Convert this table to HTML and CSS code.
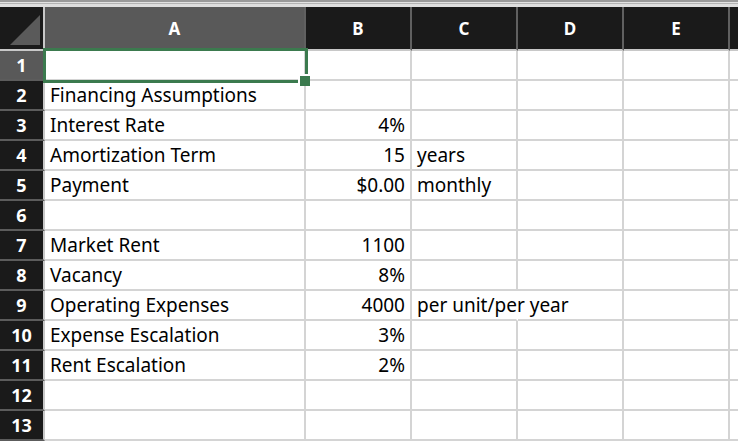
FILE: index.html
```html
<!DOCTYPE html>
<html>
<head>
<meta charset="utf-8">
<link rel="stylesheet" href="styles.css">
</head>
<body>
<div class="sheet">
  <div class="topstrip"></div>
  <div class="grid">
    <div class="corner"><svg width="43" height="42" viewBox="0 0 43 42"><polygon points="40,8 40,38 10,38" fill="#5a5a5a"/></svg></div>
    <div class="colhdr sel">A</div>
    <div class="colhdr">B</div>
    <div class="colhdr">C</div>
    <div class="colhdr">D</div>
    <div class="colhdr">E</div>
    <div class="colhdr last"></div>

    <div class="rowhdr sel">1</div>
    <div class="cell"></div><div class="cell"></div><div class="cell"></div><div class="cell"></div><div class="cell"></div><div class="cell last"></div>

    <div class="rowhdr">2</div>
    <div class="cell">Financing Assumptions</div><div class="cell"></div><div class="cell"></div><div class="cell"></div><div class="cell"></div><div class="cell last"></div>

    <div class="rowhdr">3</div>
    <div class="cell">Interest Rate</div><div class="cell num">4%</div><div class="cell"></div><div class="cell"></div><div class="cell"></div><div class="cell last"></div>

    <div class="rowhdr">4</div>
    <div class="cell">Amortization Term</div><div class="cell num">15</div><div class="cell">years</div><div class="cell"></div><div class="cell"></div><div class="cell last"></div>

    <div class="rowhdr">5</div>
    <div class="cell">Payment</div><div class="cell num">$0.00</div><div class="cell">monthly</div><div class="cell"></div><div class="cell"></div><div class="cell last"></div>

    <div class="rowhdr">6</div>
    <div class="cell"></div><div class="cell"></div><div class="cell"></div><div class="cell"></div><div class="cell"></div><div class="cell last"></div>

    <div class="rowhdr">7</div>
    <div class="cell">Market Rent</div><div class="cell num">1100</div><div class="cell"></div><div class="cell"></div><div class="cell"></div><div class="cell last"></div>

    <div class="rowhdr">8</div>
    <div class="cell">Vacancy</div><div class="cell num">8%</div><div class="cell"></div><div class="cell"></div><div class="cell"></div><div class="cell last"></div>

    <div class="rowhdr">9</div>
    <div class="cell">Operating Expenses</div><div class="cell num">4000</div><div class="cell spill">per unit/per year</div><div class="cell"></div><div class="cell"></div><div class="cell last"></div>

    <div class="rowhdr">10</div>
    <div class="cell">Expense Escalation</div><div class="cell num">3%</div><div class="cell"></div><div class="cell"></div><div class="cell"></div><div class="cell last"></div>

    <div class="rowhdr">11</div>
    <div class="cell">Rent Escalation</div><div class="cell num">2%</div><div class="cell"></div><div class="cell"></div><div class="cell"></div><div class="cell last"></div>

    <div class="rowhdr">12</div>
    <div class="cell"></div><div class="cell"></div><div class="cell"></div><div class="cell"></div><div class="cell"></div><div class="cell last"></div>

    <div class="rowhdr">13</div>
    <div class="cell"></div><div class="cell"></div><div class="cell"></div><div class="cell"></div><div class="cell"></div><div class="cell last"></div>
  </div>
  <div class="selection"><div class="handle"></div></div>
</div>
</body>
</html>
```

FILE: styles.css
```css
html, body {
  margin: 0;
  padding: 0;
  background: #ffffff;
}
body {
  width: 738px;
  height: 442px;
  overflow: hidden;
  font-family: "Noto Sans", "Liberation Sans", sans-serif;
  font-variant-ligatures: none;
}
.sheet {
  position: relative;
  width: 738px;
  height: 442px;
  overflow: hidden;
}
.topstrip {
  height: 7px;
  background: linear-gradient(to bottom, #9a9a9a 0, #9a9a9a 2px, #e2e2e2 2px, #e2e2e2 3px, #b4b4b4 3px, #b4b4b4 4px, #dedede 4px, #dedede 7px);
}
.grid {
  display: grid;
  grid-template-columns: 45px 261px 106px 106px 106px 106px 8px;
  grid-template-rows: 44px repeat(13, 30px);
}
.corner {
  background: #1a1a1a;
  border-right: 2px solid #c8c8c8;
  border-bottom: 2px solid #c8c8c8;
  box-sizing: border-box;
  overflow: hidden;
}
.corner svg { display: block; }
.colhdr {
  background: #1a1a1a;
  color: #ffffff;
  font-weight: 700;
  font-size: 17px;
  display: flex;
  align-items: center;
  justify-content: center;
  border-right: 2px solid #606060;
  border-bottom: 2px solid #c8c8c8;
  box-sizing: border-box;
}
.colhdr.sel { background: #595959; }
.colhdr.last { border-right: none; }
.rowhdr {
  background: #1a1a1a;
  color: #ffffff;
  font-weight: 700;
  font-size: 18px;
  line-height: 27px;
  padding-top: 1px;
  text-align: center;
  border-right: 2px solid #c8c8c8;
  border-bottom: 2px solid #5c5c5c;
  box-sizing: border-box;
}
.rowhdr.sel { background: #595959; }
.cell {
  font-size: 19px;
  line-height: 27px;
  padding: 1px 5px 0 5px;
  color: #000000;
  white-space: nowrap;
  border-right: 2px solid #d4d4d4;
  border-bottom: 2px solid #d4d4d4;
  box-sizing: border-box;
  overflow: visible;
}
.cell.num { text-align: right; }
.cell.spill { border-right-color: transparent; }
.cell.last { border-right: none; padding: 0; }
.selection {
  position: absolute;
  left: 43px;
  top: 48px;
  width: 265px;
  height: 35px;
  border: 3px solid #3b7a4e;
  box-sizing: border-box;
}
.handle {
  position: absolute;
  right: -5px;
  bottom: -6px;
  width: 10px;
  height: 10px;
  background: #3b7a4e;
  box-shadow: -2px -2px 0 0 #ffffff;
}
```
